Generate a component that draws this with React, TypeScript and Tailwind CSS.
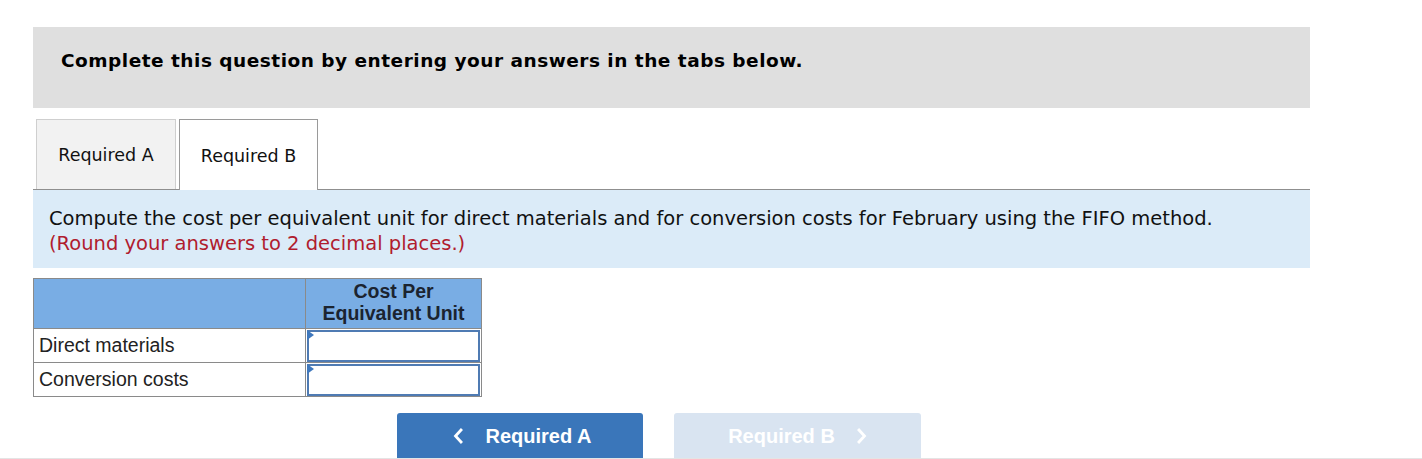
const rows = ['Direct materials', 'Conversion costs'];

function Chevron({ dir }: { dir: 'left' | 'right' }) {
  return (
    <svg width="10" height="16" viewBox="0 0 10 16" fill="none" stroke="currentColor" strokeWidth="2.8" strokeLinecap="square">
      {dir === 'left' ? <polyline points="8,2 2.5,8 8,14" /> : <polyline points="2,2 7.5,8 2,14" />}
    </svg>
  );
}

function AnswerCell() {
  return (
    <td className="border border-[#8a8a8a] p-0">
      <div className="relative mx-px h-[32px] border-2 border-[#4f7bb3] bg-white">
        <span className="absolute -left-[2px] -top-[2px] h-0 w-0 border-y-[5px] border-l-[7px] border-y-transparent border-l-[#3f78bd]" />
      </div>
    </td>
  );
}

export default function App() {
  return (
    <div className="relative h-[459px] w-[1422px] overflow-hidden bg-white font-['DejaVu_Sans',Verdana,sans-serif]">
      <div className="pl-[33px] pt-[27px] w-[1310px]">
        {/* Header */}
        <div className="flex h-[81px] items-center bg-[#dfdfdf] px-[28px] pb-[13px]">
          <h2 className="text-[18.5px] font-bold tracking-[0.5px] text-black">Complete this question by entering your answers in the tabs below.</h2>
        </div>

        {/* Tabs */}
        <div className="mt-[11px] flex items-end border-b border-[#8f8f8f] pl-[3px]">
          <div className="flex h-[70px] w-[140px] items-center justify-center border border-b-0 border-[#cfcfcf] bg-[#f2f2f2] pt-[2px] text-[17.5px] text-[#111]">
            Required A
          </div>
          <div className="-mb-px ml-[3px] flex h-[71px] w-[139px] items-center justify-center border border-b-0 border-[#9a9a9a] bg-white pt-[2px] text-[17.5px] text-[#111]">
            Required B
          </div>
        </div>

        {/* Instructions */}
        <div className="bg-[#dbebf8] px-[16px] pb-[12px] pt-[16px] text-[19.5px] leading-[25px] text-[#111]">
          <p>Compute the cost per equivalent unit for direct materials and for conversion costs for February using the FIFO method.</p>
          <p className="text-[#b01c2e]">(Round your answers to 2 decimal places.)</p>
        </div>

        {/* Table */}
        <table className="mt-[10px] border-collapse font-['Liberation_Sans',Arial,sans-serif] text-[19.5px] text-[#222]">
          <thead>
            <tr className="bg-[#79ade4]">
              <th className="w-[272px] border border-[#8a8a8a]" />
              <th className="h-[50px] w-[176px] border border-[#8a8a8a] pb-[4px] text-center font-bold leading-[22px] text-[#1b2430]">
                Cost Per
                <br />
                Equivalent Unit
              </th>
            </tr>
          </thead>
          <tbody>
            {rows.map(r => (
              <tr key={r}>
                <td className="h-[34px] border border-[#8a8a8a] px-[5px] pb-[1px] leading-[20px]">{r}</td>
                <AnswerCell />
              </tr>
            ))}
          </tbody>
        </table>
      </div>

      {/* Nav buttons */}
      <div className="absolute left-[397px] top-[413px] flex gap-[31px] font-['Liberation_Sans',Arial,sans-serif]">
        <button className="flex h-[46px] w-[246px] items-center justify-center gap-[23px] rounded-t-[3px] bg-[#3a76ba] pl-[4px] text-[20px] font-bold text-white">
          <Chevron dir="left" />
          Required A
        </button>
        <button className="flex h-[46px] w-[247px] items-center justify-center gap-[22px] rounded-t-[3px] bg-[#d9e4f1] text-[20px] font-bold text-white">
          Required B
          <Chevron dir="right" />
        </button>
      </div>
      <div className="absolute bottom-0 left-0 h-px w-full bg-[#e4e4e4]" />
    </div>
  );
}
